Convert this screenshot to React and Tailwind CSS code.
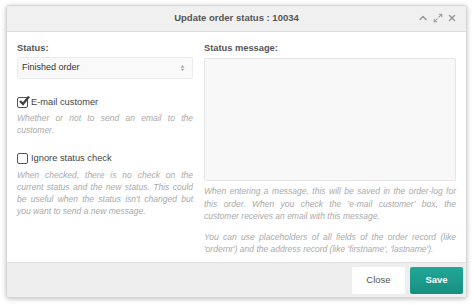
import React from 'react';
import { ChevronUp, Maximize2, X } from 'lucide-react';

const font = { fontFamily: '"Liberation Sans", Arial, sans-serif' };

function CheckBox({ checked }) {
  return (
    <span className="relative inline-block w-[11px] h-[11px] border-[1.5px] border-[#555] rounded-[2px] mr-[3px] shrink-0">
      {checked && (
        <svg viewBox="0 0 12 12" className="absolute -top-[3px] left-[0px] w-[12px] h-[12px]">
          <path d="M2 6 L5 9 L11 1.5" fill="none" stroke="#444" strokeWidth="2.4" />
        </svg>
      )}
    </span>
  );
}

export default function App() {
  return (
    <div className="w-[474px] h-[305px] bg-white pt-[5px] pl-[6px]" style={font}>
      <div className="w-[461px] h-[293px] flex flex-col border border-[#d6d6d6] rounded-[3px] shadow-[0_1px_5px_rgba(0,0,0,0.25)] overflow-hidden bg-white">
        <div className="h-[26px] shrink-0 relative flex items-center justify-center bg-[#f0f0f0] border-b border-[#dcdcdc]">
          <span className="text-[9.5px] font-bold text-[#555]">Update order status : 10034</span>
          <div className="absolute right-[9px] top-[6px] flex items-center gap-[4px] text-[#9a9a9a]">
            <ChevronUp size={12} strokeWidth={3} />
            <Maximize2 size={10} strokeWidth={2.5} />
            <X size={10} strokeWidth={3.5} />
          </div>
        </div>
        <div className="flex-1 min-h-0 overflow-hidden flex px-[10px] pt-[10px] gap-[11px]">
          <div className="w-[176px] flex flex-col">
            <div className="text-[9.3px] font-bold text-[#555] leading-[12px]">Status:</div>
            <div className="mt-[3px] h-[22px] flex items-center justify-between px-[4px] bg-[#f9f9f9] border border-[#ececec] rounded-[2px]">
              <span className="text-[9px] text-[#333]">Finished order</span>
              <svg viewBox="0 0 8 12" className="w-[5px] h-[8px] mr-[3px]">
                <path d="M1 5 L4 1.5 L7 5 Z M1 7 L4 10.5 L7 7 Z" fill="#999" />
              </svg>
            </div>
            <label className="mt-[17px] flex items-center text-[9.3px] text-[#444] leading-[12px]">
              <CheckBox checked />
              E-mail customer
            </label>
            <p className="mt-[4px] text-[8.5px] italic text-[#aaa] leading-[12px] text-justify">
              Whether or not to send an email to the customer.
            </p>
            <label className="mt-[16px] flex items-center text-[9.3px] text-[#444] leading-[12px]">
              <CheckBox />
              Ignore status check
            </label>
            <p className="mt-[5px] text-[8.5px] italic text-[#aaa] leading-[12px] text-justify">
              When checked, there is no check on the current status and the new status. This could be useful when the status isn't changed but you want to send a new message.
            </p>
          </div>
          <div className="flex-1 flex flex-col">
            <div className="text-[9.3px] font-bold text-[#555] leading-[12px]">Status message:</div>
            <div className="mt-[4px] h-[123px] shrink-0 bg-[#f8f8f8] border border-[#e6e6e6] rounded-[2px]" />
            <p className="mt-[4px] text-[8.5px] italic text-[#aaa] leading-[12.5px] text-justify">
              When entering a message, this will be saved in the order-log for this order. When you check the 'e-mail customer' box, the customer receives an email with this message.
            </p>
            <p className="mt-[8px] text-[8.5px] italic text-[#aaa] leading-[12.5px] text-justify">
              You can use placeholders of all fields of the order record (like 'ordernr') and the address record (like 'firstname', 'lastname').
            </p>
          </div>
        </div>
        <div className="h-[35px] shrink-0 flex items-center justify-end gap-[5px] pr-[3px] bg-[#eeeeee] border-t border-[#e0e0e0]">
          <button className="w-[53px] h-[27px] bg-white text-[9.5px] text-[#555] rounded-[2px]">Close</button>
          <button className="w-[53px] h-[27px] bg-gradient-to-b from-[#22a898] to-[#168f80] text-[9.5px] font-bold text-white rounded-[2px]">Save</button>
        </div>
      </div>
    </div>
  );
}
